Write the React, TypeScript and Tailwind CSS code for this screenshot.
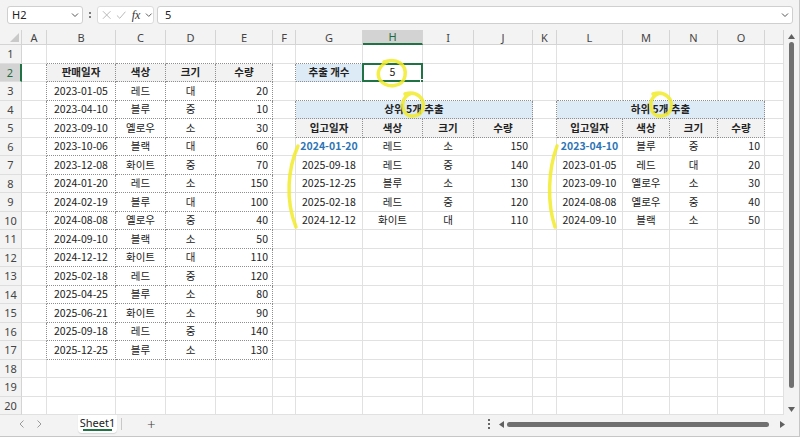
import React from "react";

// -- Sheet data ---------------------------------------------------------------

type Cell = { t: string; a?: "c" | "r"; b?: boolean; fill?: "gray" | "blue"; blue?: boolean };

const sales = [
  ["2023-01-05", "레드", "대", "20"],
  ["2023-04-10", "블루", "중", "10"],
  ["2023-09-10", "옐로우", "소", "30"],
  ["2023-10-06", "블랙", "대", "60"],
  ["2023-12-08", "화이트", "중", "70"],
  ["2024-01-20", "레드", "소", "150"],
  ["2024-02-19", "블루", "대", "100"],
  ["2024-08-08", "옐로우", "중", "40"],
  ["2024-09-10", "블랙", "소", "50"],
  ["2024-12-12", "화이트", "대", "110"],
  ["2025-02-18", "레드", "중", "120"],
  ["2025-04-25", "블루", "소", "80"],
  ["2025-06-21", "화이트", "소", "90"],
  ["2025-09-18", "레드", "중", "140"],
  ["2025-12-25", "블루", "소", "130"],
];

const top5 = [
  ["2024-01-20", "레드", "소", "150"],
  ["2025-09-18", "레드", "중", "140"],
  ["2025-12-25", "블루", "소", "130"],
  ["2025-02-18", "레드", "중", "120"],
  ["2024-12-12", "화이트", "대", "110"],
];

const bottom5 = [
  ["2023-04-10", "블루", "중", "10"],
  ["2023-01-05", "레드", "대", "20"],
  ["2023-09-10", "옐로우", "소", "30"],
  ["2024-08-08", "옐로우", "중", "40"],
  ["2024-09-10", "블랙", "소", "50"],
];

const letters = ["A", "B", "C", "D", "E", "F", "G", "H", "I", "J", "K", "L", "M", "N", "O", ""];

const cells = new Map<string, Cell>();
const put = (r: number, c: number, cell: Cell) => cells.set(`${r}-${c}`, cell);

const putTable = (r0: number, c0: number, head: string[], rows: string[][], firstBlue = false) => {
  head.forEach((h, i) => put(r0, c0 + i, { t: h, a: "c", b: true, fill: "gray" }));
  rows.forEach((row, ri) =>
    row.forEach((v, ci) =>
      put(r0 + 1 + ri, c0 + ci, {
        t: v,
        a: ci === 3 ? "r" : "c",
        b: firstBlue && ri === 0 && ci === 0,
        blue: firstBlue && ri === 0 && ci === 0,
      })
    )
  );
};

putTable(2, 2, ["판매일자", "색상", "크기", "수량"], sales);
put(2, 7, { t: "추출 개수", a: "c", b: true, fill: "blue" });
put(2, 8, { t: "5", a: "c" });
put(4, 7, { t: "상위 5개 추출", a: "c", b: true, fill: "blue" });
put(4, 12, { t: "하위 5개 추출", a: "c", b: true, fill: "blue" });
putTable(5, 7, ["입고일자", "색상", "크기", "수량"], top5, true);
putTable(5, 12, ["입고일자", "색상", "크기", "수량"], bottom5, true);

const spans: Record<string, number> = { "4-7": 4, "4-12": 4 };
const covered = new Set(["4-8", "4-9", "4-10", "4-13", "4-14", "4-15"]);

const dashed = (r: number, c: number) =>
  (r >= 2 && r <= 17 && c >= 2 && c <= 5) ||
  (r === 2 && c === 7) ||
  (r >= 4 && r <= 5 && c >= 7 && c <= 10) ||
  (r >= 4 && r <= 5 && c >= 12 && c <= 15);

// -- Small drawings -----------------------------------------------------------

function Chevron({ className = "" }: { className?: string }) {
  return (
    <svg className={className} width="8" height="6" viewBox="0 0 8 6" fill="none">
      <path d="M1 1.5l3 3 3-3" stroke="#555" strokeWidth="1" />
    </svg>
  );
}

function GridCell({ r, c }: { r: number; c: number }) {
  const key = `${r}-${c}`;
  const span = spans[key] ?? 1;
  const cell = cells.get(key);
  const dashR = dashed(r, c) || dashed(r, c + span);
  const dashB = dashed(r, c) || dashed(r + 1, c);
  const selected = r === 2 && c === 8;

  return (
    <div
      className={[
        "relative flex items-center overflow-visible whitespace-nowrap border-r border-b px-[3px]",
        dashR ? "border-r-[#8e8e8e] [border-right-style:dotted]" : "border-r-[#e1e1e1]",
        dashB ? "border-b-[#8e8e8e] [border-bottom-style:dotted]" : "border-b-[#e1e1e1]",
        span === 4 ? "col-span-4" : "",
        cell?.fill === "gray" ? "bg-[#f2f2f2]" : cell?.fill === "blue" ? "bg-[#ddebf7]" : "bg-white",
        cell?.a === "r" ? "justify-end pr-[4px]" : "justify-center",
        cell?.b ? "font-bold" : "",
        cell?.blue ? "text-[#2e75b6]" : "text-[#222]",
      ].join(" ")}
    >
      {cell?.t}
      {selected && (
        <>
          <div className="pointer-events-none absolute -left-px -top-px bottom-[-1px] right-[-1px] border-2 border-[#217346]" />
          <div className="absolute -bottom-[3px] -right-[3px] h-[5px] w-[5px] border border-white bg-[#217346]" />
        </>
      )}
    </div>
  );
}

// -- Component ----------------------------------------------------------------

export default function App() {
  const rows = Array.from({ length: 20 }, (_, i) => i + 1);

  return (
    <div className="relative flex h-[437px] w-[800px] flex-col overflow-hidden border-r border-b border-[#c6c6c6] bg-[#f3f3f3] font-['Noto_Sans_CJK_KR','Noto_Sans',sans-serif]">
      {/* Formula bar */}
      <div className="flex h-[30px] shrink-0 items-center pl-[7px] pr-[6px] text-[11px] text-[#222] font-['Noto_Sans','Noto_Sans_CJK_KR',sans-serif]">
        <div className="flex h-[18px] w-[76px] items-center justify-between rounded-[3px] border border-[#cfcfcf] bg-white pl-[4px] pr-[3px]">
          <span>H2</span>
          <Chevron />
        </div>
        <div className="flex w-[14px] flex-col items-center gap-[2px]">
          <span className="h-[2px] w-[2px] rounded-full bg-[#555]" />
          <span className="h-[2px] w-[2px] rounded-full bg-[#555]" />
        </div>
        <div className="flex h-[18px] w-[57px] items-center gap-[5px] rounded-[3px] border border-[#dcdcdc] bg-white pl-[4px]">
          <svg width="10" height="10" viewBox="0 0 10 10">
            <path d="M1 1l8 8M9 1l-8 8" stroke="#b5b5b5" strokeWidth="1" />
          </svg>
          <svg width="11" height="10" viewBox="0 0 11 10">
            <path d="M1 5.5l3 3 6-7" stroke="#b5b5b5" strokeWidth="1" fill="none" />
          </svg>
          <span className="font-['Liberation_Serif',serif] text-[12px] italic text-[#333]">fx</span>
          <Chevron />
        </div>
        <div className="ml-[3px] flex h-[18px] flex-1 items-center justify-between rounded-[3px] border border-[#cfcfcf] bg-white pl-[7px] pr-[3px]">
          <span>5</span>
          <Chevron />
        </div>
      </div>

      {/* Sheet + vertical scrollbar */}
      <div className="flex min-h-0 flex-1">
        <div className="grid w-[785px] grid-cols-[22px_25px_69px_50px_50px_57px_23px_67px_60px_51px_59px_24px_66px_47px_48px_47px_1fr] grid-rows-[15px_repeat(20,18.5px)] bg-white text-[10.5px] leading-none">
          {/* Corner */}
          <div className="relative border-r border-b border-[#d4d4d4] bg-[#f3f3f3]">
            <svg className="absolute bottom-[2px] right-[2px]" width="9" height="9" viewBox="0 0 9 9">
              <path d="M9 0V9H0z" fill="#c9c9c9" />
            </svg>
          </div>
          {/* Column headers */}
          {letters.map((l, i) => (
            <div
              key={i}
              className={[
                "flex items-center justify-center border-r border-[#d4d4d4] font-['Noto_Sans',sans-serif] text-[11px]",
                l === "H"
                  ? "border-b-2 border-b-[#217346] bg-[#d3d3d3] text-[#1e6b40]"
                  : "border-b border-b-[#d4d4d4] bg-[#f3f3f3] text-[#444]",
              ].join(" ")}
            >
              {l}
            </div>
          ))}
          {rows.map((r) => (
            <React.Fragment key={r}>
              <div
                className={[
                  "flex items-center justify-center border-b border-b-[#dedede] font-['Noto_Sans',sans-serif] text-[11px]",
                  r === 2
                    ? "border-r-2 border-r-[#217346] bg-[#d3d3d3] text-[#1e6b40]"
                    : "border-r border-r-[#d4d4d4] bg-[#f3f3f3] text-[#444]",
                ].join(" ")}
              >
                {r}
              </div>
              {letters.map((_, i) => {
                const c = i + 1;
                if (covered.has(`${r}-${c}`)) return null;
                return <GridCell key={c} r={r} c={c} />;
              })}
            </React.Fragment>
          ))}
        </div>

        {/* Vertical scrollbar */}
        <div className="flex w-[15px] flex-col items-center bg-[#f3f3f3] pt-[4px] pb-[2px]">
          <svg width="7" height="5" viewBox="0 0 7 5">
            <path d="M3.5 0L7 5H0z" fill="#606060" />
          </svg>
          <div className="mt-[3px] h-[346px] w-[5px] rounded-full bg-[#707070]" />
          <div className="flex-1" />
          <svg width="7" height="5" viewBox="0 0 7 5">
            <path d="M0 0H7L3.5 5z" fill="#606060" />
          </svg>
        </div>
      </div>

      {/* Sheet tabs + horizontal scrollbar */}
      <div className="flex h-[22px] shrink-0 items-start font-['Noto_Sans',sans-serif] text-[11px] text-[#222]">
        <div className="flex h-[20px] w-[78px] items-center gap-[13px] pl-[19px]">
          <svg width="5" height="8" viewBox="0 0 5 8">
            <path d="M4.5 0.5L1 4l3.5 3.5" stroke="#9a9a9a" fill="none" />
          </svg>
          <svg width="5" height="8" viewBox="0 0 5 8">
            <path d="M0.5 0.5L4 4 0.5 7.5" stroke="#9a9a9a" fill="none" />
          </svg>
        </div>
        <div className="flex h-[19px] w-[39px] flex-col items-center justify-center rounded-b-[4px] bg-white shadow-[0_1px_1px_rgba(0,0,0,0.12)]">
          <span className="leading-[13px]">Sheet1</span>
          <span className="h-[2px] w-[29px] bg-[#217346]" />
        </div>
        <div className="ml-[4px] mt-[4px] h-[12px] w-px bg-[#c8c8c8]" />
        <div className="ml-[25px] flex h-[20px] items-center text-[15px] font-light text-[#444]">+</div>
        <div className="flex-1" />
        <div className="flex h-[20px] w-[10px] flex-col items-center justify-center gap-[2px]">
          <span className="h-[2px] w-[2px] bg-[#666]" />
          <span className="h-[2px] w-[2px] bg-[#666]" />
          <span className="h-[2px] w-[2px] bg-[#666]" />
        </div>
        <div className="ml-[5px] flex h-[20px] w-[300px] items-center pr-[14px]">
          <svg width="5" height="7" viewBox="0 0 5 7">
            <path d="M0 3.5L5 0V7z" fill="#606060" />
          </svg>
          <div className="ml-[3px] h-[5px] w-[262px] rounded-full bg-[#707070]" />
          <div className="flex-1" />
          <svg width="5" height="7" viewBox="0 0 5 7">
            <path d="M5 3.5L0 0V7z" fill="#606060" />
          </svg>
        </div>
      </div>

      {/* Yellow pen marks over the sheet */}
      <svg className="pointer-events-none absolute left-0 top-0" width="800" height="437" viewBox="0 0 800 437" fill="none">
        <g stroke="#f2ec2a" strokeWidth="3.5" strokeLinecap="round" opacity="0.85">
          <path d="M384 62C397 57 407 65 405 76C403 87 387 89 380 80C376 73 379 65 389 61" />
          <path d="M405 94C417 90 425 99 423 108C421 117 408 119 404 111C401 104 403 97 410 94" />
          <path d="M653 94C665 90 673 99 671 108C669 117 656 119 652 111C649 104 651 97 658 94" />
          <path d="M298 146C288 168 285 200 296 227" />
          <path d="M557 146C548 170 547 203 555 227" />
        </g>
      </svg>
    </div>
  );
}
